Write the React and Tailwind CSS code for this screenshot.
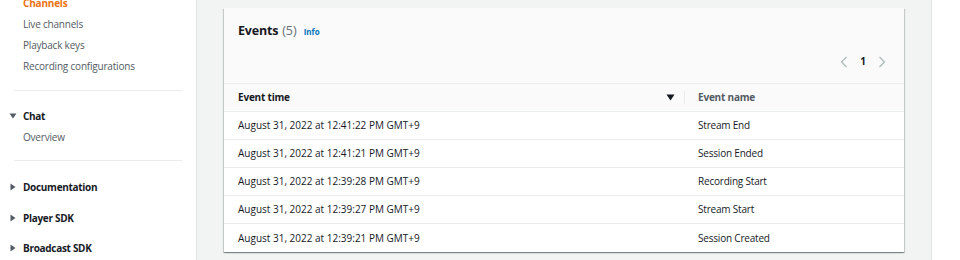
import React from "react";

const rows = [
    ["August 31, 2022 at 12:41:22 PM GMT+9", "Stream End"],
    ["August 31, 2022 at 12:41:21 PM GMT+9", "Session Ended"],
    ["August 31, 2022 at 12:39:28 PM GMT+9", "Recording Start"],
    ["August 31, 2022 at 12:39:27 PM GMT+9", "Stream Start"],
    ["August 31, 2022 at 12:39:21 PM GMT+9", "Session Created"],
];

function Caret({down}) {
    return (
        <svg width="8" height="8" viewBox="0 0 8 8" className="mr-[6px]">
            {down
                ? <path d="M0.5 1.5 L7.5 1.5 L4 6.5 Z" fill="#545b64"/>
                : <path d="M1.5 0.5 L6.5 4 L1.5 7.5 Z" fill="#545b64"/>}
        </svg>
    );
}

function Section({title, down}) {
    return (
        <div className="flex items-center pl-[9px] h-[20px] text-[10px] font-bold tracking-[-0.3px] text-[#16191f]">
            <Caret down={down}/>
            {title}
        </div>
    );
}

function Sidebar() {
    return (
        <div className="w-[197px] shrink-0 bg-white border-r border-[#e3e5e5] overflow-hidden">
            <div className="-mt-[7px] text-[10px] text-[#545b64] tracking-[-0.2px]">
                <div className="pl-[23px] h-[21px] leading-[21px] text-[#ec7211] font-bold">Channels</div>
                <div className="pl-[23px] h-[21px] leading-[21px]">Live channels</div>
                <div className="pl-[23px] h-[21px] leading-[21px]">Playback keys</div>
                <div className="pl-[23px] h-[21px] leading-[21px]">Recording configurations</div>
                <div className="mx-[14px] mt-[13px] mb-[15px] border-t border-[#eaeded]"/>
                <Section title="Chat" down/>
                <div className="pl-[23px] mt-[1px] h-[21px] leading-[21px]">Overview</div>
                <div className="mx-[14px] mt-[12px] mb-[16px] border-t border-[#eaeded]"/>
                <Section title="Documentation"/>
                <div className="h-[11px]"/>
                <Section title="Player SDK"/>
                <div className="h-[10px]"/>
                <Section title="Broadcast SDK"/>
            </div>
        </div>
    );
}

function Pager() {
    return (
        <div className="flex items-center justify-end gap-[12px] pr-[18px] text-[10px]">
            <svg width="8" height="12" viewBox="0 0 8 12"><path d="M6.5 1 L1.5 6 L6.5 11" stroke="#aab7b8" strokeWidth="1.2" fill="none"/></svg>
            <span className="font-bold text-[#16191f]">1</span>
            <svg width="8" height="12" viewBox="0 0 8 12"><path d="M1.5 1 L6.5 6 L1.5 11" stroke="#aab7b8" strokeWidth="1.2" fill="none"/></svg>
        </div>
    );
}

function EventsCard() {
    return (
        <div className="w-[680px] bg-white shadow-[0_1px_1px_0_rgba(0,28,36,0.3),1px_1px_1px_0_rgba(0,28,36,0.15),-1px_1px_1px_0_rgba(0,28,36,0.15)]">
            <div className="bg-[#fafafa] h-[76px] border-b border-[#eaeded] pt-[14px]">
                <div className="flex items-baseline pl-[14px] h-[20px]">
                    <span className="text-[12.5px] font-bold tracking-[-0.2px] text-[#16191f]">Events</span>
                    <span className="text-[12.5px] text-[#687078] ml-[4px]">(5)</span>
                    <span className="text-[8px] font-bold text-[#0073bb] ml-[7px]">Info</span>
                </div>
                <div className="mt-[12px]"><Pager/></div>
            </div>
            <div className="flex items-center h-[28px] bg-[#fafafa] border-b border-[#eaeded] text-[10px] font-bold tracking-[-0.2px]">
                <div className="w-[460px] pl-[14px] flex items-center justify-between pr-[9px] text-[#16191f]">
                    <span>Event time</span>
                    <svg width="9" height="7" viewBox="0 0 9 7"><path d="M0.5 0.5 L8.5 0.5 L4.5 6.5 Z" fill="#16191f"/></svg>
                </div>
                <div className="h-[13px] border-l border-[#eaeded]"/>
                <div className="pl-[13px] text-[#545b64]">Event name</div>
            </div>
            {rows.map(([t, n], i) => (
                <div key={i} className={"flex items-center h-[28px] text-[10px] text-[#16191f] " + (i < rows.length - 1 ? "border-b border-[#eaeded]" : "")}>
                    <div className="w-[460px] pl-[14px]">{t}</div>
                    <div className="pl-[14px] tracking-[-0.2px]">{n}</div>
                </div>
            ))}
        </div>
    );
}

export default function App() {
    return (
        <div className="w-[960px] h-[260px] flex overflow-hidden bg-white"
             style={{fontFamily: '"Open Sans", "Liberation Sans", sans-serif'}}>
            <Sidebar/>
            <div className="w-[735px] shrink-0 bg-[#f2f3f3] border-r border-[#e3e5e5] pl-[27px] pt-[8px]">
                <EventsCard/>
            </div>
        </div>
    );
}
